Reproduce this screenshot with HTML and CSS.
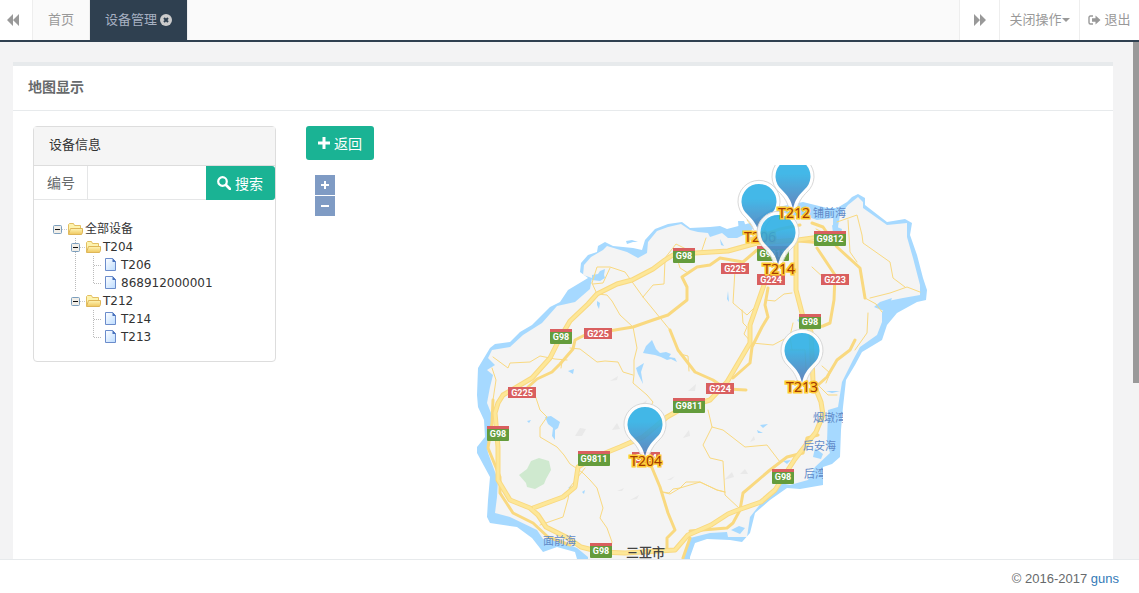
FILE: index.html
```
<!DOCTYPE html>
<html lang="zh-CN">
<head>
    <meta charset="UTF-8">
    <meta name="viewport" content="width=device-width, initial-scale=1.0">
    <title>设备管理</title>
    <link rel="stylesheet" href="styles.css">
</head>
<body>

<nav class="tabs-bar">
    <button type="button" class="bar-btn roll-left" aria-label="向左">
        <svg width="14" height="12" viewBox="0 0 14 12"><path d="M7 0v12L1 6zM13 0v12L7 6z"/></svg>
    </button>
    <div class="tabs">
        <a href="#" class="tab">首页</a>
        <a href="#" class="tab active">设备管理
            <svg width="12" height="12" viewBox="0 0 12 12"><circle cx="6" cy="6" r="6" fill="#ccc"/><path d="M4 4l4 4M8 4L4 8" stroke="#2f4050" stroke-width="2"/></svg>
        </a>
    </div>
    <button type="button" class="bar-btn roll-right" aria-label="向右">
        <svg width="14" height="12" viewBox="0 0 14 12"><path d="M1 0v12l6-6zM7 0v12l6-6z"/></svg>
    </button>
    <button type="button" class="bar-btn close-menu">关闭操作<span class="caret"></span></button>
    <a href="#" class="bar-btn logout">
        <svg width="13" height="10" viewBox="0 0 13 10"><path d="M5 1H2.500Q1 1 1 2.500v5Q1 9 2.500 9H5" fill="none" stroke="#999" stroke-width="1.400"/><path d="M4 3.200h3.500V.500L12.500 5 7.500 9.500V6.800H4z"/></svg>
        退出
    </a>
</nav>

<div class="main">
    <div class="content">
        <div class="ibox">
            <h5 class="ibox-title">地图显示</h5>
            <div class="ibox-content">
                <div class="panel">
                    <div class="panel-heading">设备信息</div>
                    <form class="input-group">
                        <label for="deviceNo">编号</label>
                        <input type="text" id="deviceNo" name="deviceNo">
                        <button type="button" class="btn">
                            <svg width="14" height="14" viewBox="0 0 14 14"><circle cx="5.500" cy="5.500" r="4.300" fill="none" stroke="#fff" stroke-width="2.200"/><path d="M9 9l4 4" stroke="#fff" stroke-width="2.600" stroke-linecap="round"/></svg>
                            搜索
                        </button>
                    </form>
                    <ul class="tree">
                        <li>
                            <div class="node"><svg class="switch"><use href="#minus"/></svg><svg class="icon"><use href="#folder"/></svg>全部设备</div>
                            <ul>
                                <li>
                                    <div class="node"><svg class="switch"><use href="#line-top"/><use href="#minus"/></svg><svg class="icon"><use href="#folder"/></svg>T204</div>
                                    <ul class="line">
                                        <li><div class="node"><svg class="switch"><use href="#line-mid"/></svg><svg class="icon"><use href="#page"/></svg>T206</div></li>
                                        <li><div class="node"><svg class="switch"><use href="#line-end"/></svg><svg class="icon"><use href="#page"/></svg>868912000001</div></li>
                                    </ul>
                                </li>
                                <li>
                                    <div class="node"><svg class="switch"><use href="#minus"/></svg><svg class="icon"><use href="#folder"/></svg>T212</div>
                                    <ul>
                                        <li><div class="node"><svg class="switch"><use href="#line-mid"/></svg><svg class="icon"><use href="#page"/></svg>T214</div></li>
                                        <li><div class="node"><svg class="switch"><use href="#line-end"/></svg><svg class="icon"><use href="#page"/></svg>T213</div></li>
                                    </ul>
                                </li>
                            </ul>
                        </li>
                    </ul>
                </div>

                <div class="map-col">
                    <button type="button" class="btn">
                        <svg width="12" height="12" viewBox="0 0 12 12"><path d="M4.500 0h3v4.500H12v3H7.500V12h-3V7.500H0v-3h4.500z" fill="#fff"/></svg>
                        返回
                    </button>
                    <div class="map">
                        <svg class="map-svg" viewBox="306 165 792 600">
                            <!-- sea -->
                            <path class="water" d="M577 600V559L575 552 557 547 543 552 532 538 517 527 490 523 487 517 488 500 490 477 477 453 477 447 485 437 484 420 478 407 477 395 478 368 490 348 495 344 510 342 520 332 532 325 550 307 560 302 568 290 588 278 580 272 581 263 588 255 597 252 598 246 605 242 613 246 633 248 642 250 645 240 655 229 668 224 682 222 690 228 710 227 720 226 727 229 750 223 773 208 803 202 827 208 837 208 847 202 852 197 858 194 865 198 865 205 887 222 905 219 912 223 910 235 917 255 923 278 927 290 926 300 917 302 897 313 887 325 882 340 862 352 855 365 846 380 843 407 841 430 840 457 832 464 823 467 823 485 800 489 787 488 770 500 755 513 750 533 742 542 730 540 707 539 695 543 690 557V600z"/>
                            <!-- land -->
                            <path class="land" d="M588 600V557L577 548 557 540 543 539 537 530 510 517 495 513 497 497 498 480 488 453 487 447 492 437 491 413 487 403 490 387 493 375 487 370 495 365 488 358 492 350 510 347 523 335 542 323 557 306 575 302 590 289 592 278 583 275 584 265 591 257 603 250 607 246 627 252 638 258 647 253 648 242 657 231 668 227 681 224 690 230 698 232 708 233 710 237 722 233 728 238 737 238 750 232 762 218 777 217 803 215 817 220 833 218 833 227 837 233 840 215 848 205 858 197 863 202 863 208 887 225 907 223 907 237 913 258 920 285 920 295 903 298 883 302 887 306 882 312 882 322 877 335 860 347 853 360 842 382 838 407 828 410 827 443 830 453 815 467 808 480 790 485 780 483 762 502 750 517 747 537 728 537 727 532 710 533 690 538 683 558V600z"/>
                            <path class="water" d="M592 275l6-1 2-3 5-2-1 6 1 3-5 3-8-1zM626 241l6-1 6 2-5 0-6 2zM643 353l3-7 6-6 4 9 4 4 6-1 5 2-2 3 6 1 2 4-6-3-4 1-6-3-6-2zM636 368l8-5-3 9 2 12-5-10zM545 417l6-1 9 6-2 6-3 2 0 10-3-4 1-8-5-4zM568 371l6-2-1 5zM597 301l3 2-1 6-2-4zM728 291l1 11-2-3zM832 225l10 4-2 8-7-4zM770 213l14-2-6 5zM880 302l12-4-2 5-6 8-10-4zM815 448l8 6-2 5-8-2zM731 530l8-4 6 2-5 6zM783 461l8-1-4 4zM826 391l14 0-8 2zM760 425l8-1-5 4zM757 430l6 3-5 0zM797 320l5-3-1 8zM568 488l4-3-2 4zM582 492l3-2-1 4zM527 421l4-1-2 3zM720 239l4 7-3-1zM738 221l6 0 3 9-8 3z"/>
                            <path class="forest" d="M519 475l8-6 4-8 8-3 10 3 2 9-5 9-2 5-9 5-8-2-1-4z"/>
                            <path class="hill" d="M610 381l8-5-1 4zM688 391l8-7-1 7zM575 436l5-8 6 1-4 7zM683 438l6-8 1 6zM724 480l8-8 2 5zM740 474l5-5 3 5zM640 405l7-5-2 5zM612 430l5-7 3 6zM667 480l8-4-4 4zM630 500l9-5-2 4zM617 491l7-3-2 3zM750 442l4-6 1 4z"/>

                            <g class="minor">
                                <path d="M592 283l5-16 13 0 15 5 18 25 27 33M593 284l10-1 7-15M597 294l10 1 5 6 8 14 13 12 4 21-3 12 0 15-1 8 14 12 6 7-2 4"/>
                                <path d="M592 283l5 11M665 260l-1 24-11 1-10 12M665 258l11-14 12 6M677 258l3 10 8 5M706 238l-4 12"/>
                                <path d="M493 357l15 11 2-5 20-1 10-6 15 3 12 1M492 368l4 12-3 20M570 348l10 1 17 13 8-1 13 1 5 10 10 3M562 362l-1 6"/>
                                <path d="M535 395l5 15 7 7-7 10 0 10 17 10 7 8 6 9 6 4 7 5 7 7 7 8 6 20-3 10 7 10 5 14-2 7M585 468l-15 19-2 12-5 18-23 8M663 492l6 1 4-4 7-1 6-6 14 0 17 8 8 2"/>
                                <path d="M735 270l-2 33 14 12 8-8M742 310l1 13 4 4-3 7 8 9 21 2 17-9M708 410l4 17 11 3 22 17 22-2 13 17M712 427l-9 18 7 13 13 3 2 34 15 14M765 300l10 1 9-7 8-1M725 492l-8-2-17-8-20 6-10 6-8-2"/>
                                <path d="M870 298l20-5 17-6 13 5M837 222l20-7 5 20 1 8 27 19 3 16 12 9M848 220l2 32 7 10M812 267l12 11 8-1M868 313l-1 20-12 17M793 323l-3 13 2 14M818 385l10 10 9 0M822 366l8 7-4 10M790 350l15 0 1 20M816 229l12 6 7 8M865 298l11 6 6 8M747 220l20 25M680 354l8 2 1 15"/>
                            </g>
                            <g class="major">
                                <path d="M757 250l-14 12-23-4-10 7-13 2-15 10 5 10 0 13-19 15-15 5-20 7-30 5-18 3-10 5-2 9-13 15-8 8-15 7-9 8"/>
                                <path d="M493 400l-1 23-4 25 12 29 0 16 13 20 20 10 15 14 22 8"/>
                                <path d="M670 330l8 20 17 22 18 8 10 7M768 288l-3 17 3 12-6 10-10 20-2 16-17 15M746 390l-19-1M650 463l10 24 8 26 7 17-8 8 0 12"/>
                                <path d="M817 248l18 27-1 25-4 23-7 3-10 2M855 340l-5 10-13 10-10 17-9 8M818 435l-11 3-4 15-16 4-17 13-27 23-3 17-7 13-6 5-37 3"/>
                                <path d="M812 223l11 4 14 20 23 21 5 30M798 241l25 2M757 222l12 14M750 239l30-10 20-4M683 558l7-20"/>
                            </g>
                            <g class="highway-case">
                                <path id="highways" d="M820 237l-22 3-41 3-29 8-33 2-22 2-8 5-12 9-21 11-15 4-20 10-9 10-18 17-10 17-10 20-18 20-29 17-5 8-3 10 3 34 0 33 12 20 20 8 8 7 8 12 22 11 13 9 20 5 24 1 50-3 13-15 23-10 17-11 10-4 23-8 14-12 20-31 21-27 7-17-2-13-8-20-2-50-8-15-7-27 0-50M764 285l-14 40 0 18-23 39-17 18-27 8-16 9-24 20-23 10-27 11-15 9-3 20-12 10-30 11"/>
                            </g>
                            <use href="#highways" class="highway-core"/>

                            <!-- road signs -->
                            <g class="signs">
                                <use href="#sign-g" x="550" y="329"/><text x="561" y="340">G98</text>
                                <use href="#sign-g" x="673" y="248"/><text x="684" y="259">G98</text>
                                <use href="#sign-g" x="799" y="314"/><text x="810" y="325">G98</text>
                                <use href="#sign-g" x="487" y="426"/><text x="498" y="437">G98</text>
                                <use href="#sign-g" x="772" y="469"/><text x="783" y="480">G98</text>
                                <use href="#sign-g" x="590" y="543"/><text x="601" y="554">G98</text>
                                <use href="#sign-gw" x="578" y="451"/><text x="594" y="462">G9811</text>
                                <use href="#sign-gw" x="673" y="398"/><text x="689" y="409">G9811</text>
                                <use href="#sign-gw" x="757" y="246"/><text x="773" y="257">G9811</text>
                                <use href="#sign-gw" x="814" y="231"/><text x="830" y="242">G9812</text>
                                <use href="#sign-r" x="721" y="263"/><text x="735" y="272">G225</text>
                                <use href="#sign-r" x="584" y="328"/><text x="598" y="337">G225</text>
                                <use href="#sign-r" x="508" y="387"/><text x="522" y="396">G225</text>
                                <use href="#sign-r" x="757" y="274"/><text x="771" y="283">G224</text>
                                <use href="#sign-r" x="706" y="383"/><text x="720" y="392">G224</text>
                                <use href="#sign-r" x="632" y="452"/><text x="646" y="461">G224</text>
                                <use href="#sign-r" x="821" y="274"/><text x="835" y="283">G223</text>
                            </g>

                            <g class="sea-names">
                                <text x="813" y="217">铺前海</text>
                                <text x="813" y="422" clip-path="url(#clip-bay)">烟墩湾</text>
                                <text x="803" y="450">后安海</text>
                                <text x="804" y="478" clip-path="url(#clip-cove)">后湾</text>
                                <text x="543" y="545">面前海</text>
                            </g>
                            <text class="city" x="626" y="557">三亚市</text>

                            <!-- device markers -->
                            <g class="markers">
                                <use href="#pin" x="759" y="201"/><text x="760" y="242">T206</text>
                                <use href="#pin" x="793" y="176"/>
                                <use href="#pin" x="778" y="232"/><text x="779" y="274">T214</text>
                                <text x="794" y="218">T212</text>
                                <use href="#pin" x="802" y="350"/><text x="802" y="392">T213</text>
                                <use href="#pin" x="645" y="424"/><text x="646" y="466">T204</text>
                            </g>
                        </svg>
                        <div class="zoom">
                            <button type="button" aria-label="放大"><svg width="10" height="10" viewBox="0 0 10 10"><path d="M5 1v8M1 5h8" stroke="#fff" stroke-width="2"/></svg></button>
                            <button type="button" aria-label="缩小"><svg width="10" height="10" viewBox="0 0 10 10"><path d="M1 5h8" stroke="#fff" stroke-width="2"/></svg></button>
                        </div>
                    </div>
                </div>
            </div>
        </div>
    </div>
    <div class="scrollbar"><div class="thumb"></div></div>
</div>

<footer class="footer">© 2016-2017 <a href="#">guns</a></footer>

<!-- shared shapes -->
<svg class="defs" width="0" height="0">
    <defs>
        <linearGradient id="pin-fill" x1="0" y1="0" x2="0" y2="1">
            <stop offset="0.300" stop-color="#2fb1e6"/>
            <stop offset="1" stop-color="#5578b5"/>
        </linearGradient>
        <linearGradient id="folder-fill" x1="0" y1="0" x2="0" y2="1">
            <stop offset="0" stop-color="#fff6b8"/>
            <stop offset="1" stop-color="#efc75e"/>
        </linearGradient>
        <linearGradient id="page-fill" x1="0" y1="0" x2="1" y2="1">
            <stop offset="0" stop-color="#fff"/>
            <stop offset="1" stop-color="#bcdcff"/>
        </linearGradient>
        <clipPath id="clip-bay"><rect x="810" y="405" width="33" height="22"/></clipPath>
        <clipPath id="clip-cove"><rect x="800" y="464" width="23" height="20"/></clipPath>
        <g id="pin" opacity="0.900">
            <path d="M-4 32C-7 24-9 21-14 16A21 21 0 1 1 14 16C9 21 7 24 4 32Q0 36-4 32z" fill="#fff" stroke="#d5d5d5"/>
            <path d="M0 33C-2 24-5 20-11 14A17.500 17.500 0 1 1 11 14C5 20 2 24 0 33z" fill="url(#pin-fill)"/>
        </g>
        <g id="sign-g"><rect width="22" height="15" rx="1" fill="#649c3c"/><rect width="22" height="3" fill="#d95f5f"/></g>
        <g id="sign-gw"><rect width="32" height="15" rx="1" fill="#649c3c"/><rect width="32" height="3" fill="#d95f5f"/></g>
        <g id="sign-r"><rect width="28" height="11" fill="#d95f5f"/></g>
        <g id="minus"><path d="M13 9.500h5" stroke="#ccc" stroke-dasharray="1 1"/><rect x="4.500" y="5.500" width="8" height="8" rx="1" fill="#f1eee8" stroke="#7b9ebd"/><path d="M6 9.500h5" stroke="#111"/></g>
        <g id="line-top"><path d="M8.500 0v18" stroke="#bbb" stroke-dasharray="1 1"/></g>
        <g id="line-mid"><path d="M8.500 0v18M9 9.500h8" stroke="#bbb" stroke-dasharray="1 1" fill="none"/></g>
        <g id="line-end"><path d="M8.500 0v10M9 9.500h8" stroke="#bbb" stroke-dasharray="1 1" fill="none"/></g>
        <g id="folder"><path d="M1.500 14V4.500l1-1h4l1 2h6V10" fill="#fdf3ae" stroke="#e3bf62"/><path d="M1.500 14.500l2-6h12v4l-1 2z" fill="url(#folder-fill)" stroke="#deb658"/></g>
        <g id="page"><path d="M2.500 2.500h7l3 3v9h-10z" fill="url(#page-fill)" stroke="#6b8ccb"/><path d="M9.500 2v4H13z" fill="#4771bd"/></g>
    </defs>
</svg>

</body>
</html>
```

FILE: styles.css
```
* {
    box-sizing: border-box;
}

body {
    margin: 0;
    height: 100vh;
    display: flex;
    flex-direction: column;
    font-family: "Liberation Sans", "Noto Sans CJK SC", sans-serif;
    font-size: 13px;
    line-height: 20px;
    color: #676a6c;
    background: #f3f3f4;
}

a {
    text-decoration: none;
}

button, input {
    font-family: inherit;
    font-size: 14px;
    border: none;
}

button {
    cursor: pointer;
}

/* top tabs */
.tabs-bar {
    display: flex;
    flex: none;
    height: 42px;
    background: #fafafa;
    border-bottom: 2px solid #2f4050;
}

.tabs {
    display: flex;
    flex: 1;
}

.tab, .bar-btn {
    display: flex;
    align-items: center;
    justify-content: center;
    font-size: 13px;
    line-height: 18px;
    color: #999;
}

.tab {
    gap: 3px;
    padding: 0 15px;
    border-right: 1px solid #eee;
}

.tab.active {
    background: #2f4050;
    color: #a7b1c2;
}

.bar-btn {
    padding: 0;
    background: #fff;
    border-left: 1px solid #eee;
    fill: #999;
}

.roll-left {
    width: 33px;
    padding-right: 6px;
    border-left: none;
    border-right: 1px solid #eee;
}

.roll-right {
    width: 40px;
}

.close-menu {
    width: 80px;
}

.logout {
    width: 60px;
    gap: 3px;
}

.caret {
    border-top: 4px solid #999;
    border-left: 4px solid transparent;
    border-right: 4px solid transparent;
}

/* scrolling page */
.main {
    display: flex;
    flex: 1;
    min-height: 0;
}

.content {
    flex: 1;
    padding: 20px 20px 20px 13px;
    overflow-y: auto;
    scrollbar-width: none;
}

.scrollbar {
    width: 6px;
    background: #f3f3f3;
}

.thumb {
    height: 66%;
    background: #999;
}

.ibox {
    background: #fff;
    border-top: 4px solid #e7eaec;
}

.ibox-title {
    margin: 0;
    padding: 11px 15px 13px;
    font-size: 14px;
    font-weight: 600;
    border-bottom: 1px solid #e7eaec;
}

.ibox-content {
    display: flex;
    align-items: flex-start;
    gap: 30px;
    padding: 15px 15px 20px 20px;
}

.panel {
    width: 243px;
    flex: none;
    border: 1px solid #ddd;
    border-radius: 4px;
}

.panel-heading {
    padding: 8px 15px 10px;
    color: #333;
    background: #f5f5f5;
    border-bottom: 1px solid #ddd;
}

.input-group {
    display: flex;
    height: 34px;
}

.input-group label {
    padding: 7px 12px 5px 13px;
    font-size: 14px;
    border: 1px solid #e5e6e7;
    border-top: none;
    border-left: none;
}

.input-group input {
    flex: 1;
    min-width: 0;
    padding: 6px 12px;
    border-bottom: 1px solid #e5e6e7;
}

.btn {
    display: inline-flex;
    align-items: center;
    gap: 4px;
    height: 34px;
    padding: 0 12px 1px;
    color: #fff;
    background: #1ab394;
    border-radius: 3px;
}

.input-group .btn {
    padding: 0 12px 1px 11px;
    border-radius: 0 3px 3px 0;
}

/* device tree */
.tree, .tree ul {
    margin: 0;
    padding: 0;
    list-style: none;
}

.tree {
    padding: 20px 15px 15px;
    font-family: "DejaVu Sans", "Noto Sans CJK SC", sans-serif;
    font-size: 12px;
    color: #333;
}

.tree ul {
    padding-left: 18px;
}

.tree ul.line {
    background: repeating-linear-gradient(#bbb 0 1px, transparent 1px 2px) 8px 0 / 1px 100% no-repeat;
}

.node {
    display: flex;
    height: 18px;
    line-height: 18px;
}

.switch, .icon {
    width: 18px;
    height: 18px;
    flex: none;
}

/* map */
.map-col {
    flex: 1;
    min-width: 0;
}

.map {
    position: relative;
    margin-top: 5px;
}

.map-svg {
    display: block;
    width: 100%;
    overflow: hidden;
}

.water {
    fill: #a6d9ff;
}

.land {
    fill: #f4f4f4;
}

.forest {
    fill: #cfe9cf;
}

.hill {
    fill: #e9e9e9;
}

.minor, .major, .highway-case {
    fill: none;
    stroke: #f9d980;
    stroke-linejoin: round;
    stroke-linecap: round;
}

.minor {
    stroke-width: 1px;
}

.major {
    stroke-width: 3px;
}

.highway-case {
    stroke-width: 5px;
}

.highway-core {
    fill: none;
    stroke: #fde798;
    stroke-width: 3px;
    stroke-linejoin: round;
}

.signs text {
    font: bold 9px Roboto, sans-serif;
    fill: #fff;
    text-anchor: middle;
}

.sea-names text {
    font-size: 11px;
    fill: #6189c7;
}

.city {
    font-size: 13px;
    font-weight: 500;
    fill: #444;
}

.markers text {
    font: 14px "Noto Sans", sans-serif;
    fill: #a33a00;
    stroke: #ffcc33;
    stroke-width: 3px;
    paint-order: stroke;
    text-anchor: middle;
}

.zoom {
    position: absolute;
    top: 10px;
    left: 9px;
    display: flex;
    flex-direction: column;
    gap: 1px;
}

.zoom button {
    display: flex;
    align-items: center;
    justify-content: center;
    width: 20px;
    height: 20px;
    padding: 0;
    background: #7f9bc4;
}

.footer {
    flex: none;
    height: 34px;
    padding: 9px 20px;
    text-align: right;
    background: #fff;
    border-top: 1px solid #e7eaec;
}

.footer a {
    color: #337ab7;
}

.defs {
    position: absolute;
}
```
